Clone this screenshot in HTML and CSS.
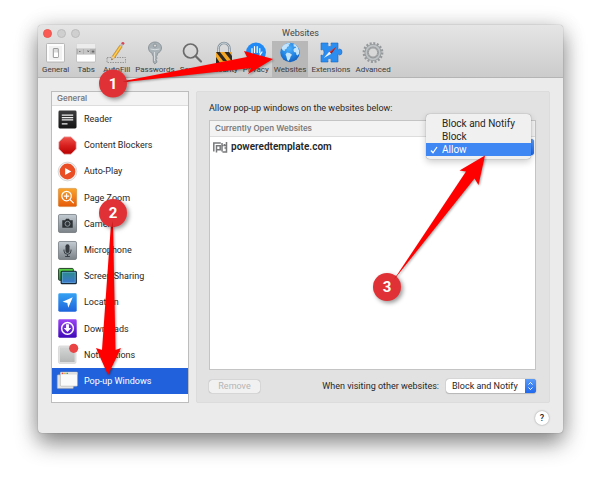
FILE: index.html
```html
<!DOCTYPE html>
<html lang="en">
<head>
<meta charset="utf-8">
<title>Websites</title>
<link rel="stylesheet" href="styles.css">
</head>
<body>
<svg class="defs" width="0" height="0" aria-hidden="true">
  <defs>
    <linearGradient id="g-dark" x2="0" y2="1"><stop stop-color="#3c3c3e"/><stop offset="1" stop-color="#151516"/></linearGradient>
    <linearGradient id="g-red" x2="0" y2="1"><stop stop-color="#f0524c"/><stop offset=".5" stop-color="#d8211f"/><stop offset="1" stop-color="#b80000"/></linearGradient>
    <linearGradient id="g-orange" x2="0" y2="1"><stop stop-color="#f9a52b"/><stop offset="1" stop-color="#e65a08"/></linearGradient>
    <linearGradient id="g-steel" x2="0" y2="1"><stop stop-color="#c3ccd2"/><stop offset="1" stop-color="#7b8389"/></linearGradient>
    <linearGradient id="g-blue" x2="0" y2="1"><stop stop-color="#35a2f3"/><stop offset="1" stop-color="#1d64dc"/></linearGradient>
    <linearGradient id="g-purple" x2="0" y2="1"><stop stop-color="#9d44f5"/><stop offset="1" stop-color="#3d08b8"/></linearGradient>
    <linearGradient id="g-green" x2="0" y2="1"><stop stop-color="#5bd544"/><stop offset="1" stop-color="#28913c"/></linearGradient>
    <linearGradient id="g-screen" x2="0" y2="1"><stop stop-color="#2a8c86"/><stop offset="1" stop-color="#3d74d6"/></linearGradient>
    <linearGradient id="g-grey" x2="0" y2="1"><stop stop-color="#d4d5d5"/><stop offset="1" stop-color="#b5b7b7"/></linearGradient>
    <radialGradient id="g-globe" cx=".45" cy=".3" r=".75"><stop stop-color="#4fb1fb"/><stop offset=".6" stop-color="#1e7fdf"/><stop offset="1" stop-color="#1559b5"/></radialGradient>
  </defs>
</svg>

<main class="window">
  <header class="chrome">
    <div class="titlebar">
      <div class="lights"><i class="light close"></i><i class="light"></i><i class="light"></i></div>
      <h1 class="title">Websites</h1>
    </div>
    <nav class="toolbar">
      <button class="tool"><svg viewBox="0 0 22 22"><rect x="1.500" y="1.500" width="18" height="18.500" rx="1" fill="#fdfdfd" stroke="#aaa" stroke-width=".8"/><rect x="4" y="4" width="13" height="14" fill="#f1f1f1"/><rect x="8.300" y="6.500" width="5" height="9" rx=".5" fill="#ddd" stroke="#888" stroke-width=".8"/><path d="M9 10.500h4v4.500H9z" fill="#fff"/></svg>General</button>
      <button class="tool"><svg viewBox="0 0 22 22"><rect x="1.500" y="1.500" width="19" height="18.500" rx="1" fill="#fff" stroke="#aaa" stroke-width=".6"/><path d="M1.500 1.500h19V6.500h-19z" fill="#ececec"/><path d="M1.500 6.500h19v6h-19z" fill="#b2b2b2"/><path d="M3 7h5v5H3zM9 7h6v5H9z" fill="#c6c6c6"/><path d="M4 9.500h1.500M12.500 8.500l1.500 1.500m0-1.500l-1.500 1.500M18 8.300v2.600m-1.300-1.300h2.600" stroke="#555" stroke-width=".7"/></svg>Tabs</button>
      <button class="tool"><svg viewBox="0 0 22 22"><rect x="1" y="15.500" width="18.500" height="5" fill="none" stroke="#8e8e8e" stroke-width=".9" stroke-dasharray="1.500 1"/><path d="M5.500 18l.8-3.800L13.800 3.200l2.400 1.600L8.700 15.800z" fill="#f0ae2c" stroke="#aa7018" stroke-width=".5"/><path d="M7.500 15L15 4" stroke="#ffdb61" stroke-width=".9"/><path d="M5.500 18l.8-3.800 2.400 1.600z" fill="#ecd2a5"/><path d="M5.500 18l.3-1.500 1 .6z" fill="#333"/><path d="M13.800 3.200L15 1.500l2.400 1.600-1.200 1.700z" fill="#bbb"/><path d="M15 1.500L15.900.2q2-.7 2.700 1.300l-1.200 1.600z" fill="#d34758"/></svg>AutoFill</button>
      <button class="tool"><svg viewBox="0 0 22 22"><path d="M11 0C7.300 0 4.500 2.500 4.500 6c0 2.500 1.500 4.500 3.800 5.500v1.500l1 1v6l1.500 2 2-1.700v-1.500l-1-1 1-1v-1.200l-.8-1 1.300-1.200v-1.900c2.500-1 4.200-3 4.200-5.500C17.500 2.500 14.700 0 11 0zm0 2a1.600 1.600 0 110 3.200A1.600 1.600 0 0111 2z" fill="#a9b2b7" stroke="#828b90" stroke-width=".8"/><path d="M6.500 7q4.500 1.500 9 0M10.500 10v9" fill="none" stroke="#d6dcdf" stroke-width="1"/></svg>Passwords</button>
      <button class="tool"><svg viewBox="0 0 22 22"><circle cx="9.500" cy="9" r="7" fill="none" stroke="#6b6b6b" stroke-width="1.700"/><path d="M14.500 14l5.500 5.500" stroke="#6b6b6b" stroke-width="2.200" stroke-linecap="round"/></svg>Search</button>
      <button class="tool"><svg viewBox="0 0 22 22"><path d="M5.500 11V6.500a5.500 5.500 0 0111 0V11" fill="none" stroke="#85939d" stroke-width="2.600"/><path d="M5.500 10V6.500a5.500 5.500 0 0111 0V10" fill="none" stroke="#cdd5da" stroke-width="1"/><rect x="3" y="10" width="16" height="11" rx="1" fill="#f5a623"/><path d="M3 10l7 9h4L7 10zM11.500 10l7 9h.5v-5l-3-4zM3 15l4 6H3z" fill="#2e2922"/></svg>Security</button>
      <button class="tool"><svg viewBox="0 0 22 22"><circle cx="11" cy="10.500" r="10" fill="#228af4"/><path d="M7 11V6.500m2.500 4V4.500m2.700 6V4.500m2.600 6.500V6.500M7 11v3q1 3 4 3t4-4l2-3" fill="none" stroke="#fff" stroke-width="1.200" stroke-linecap="round"/></svg>Privacy</button>
      <button class="tool selected" aria-pressed="true"><svg viewBox="0 0 22 22"><circle cx="11" cy="10.500" r="9.700" fill="url(#g-globe)"/><path d="M3 5C5 2 8 1 10.500 1l1 1-2 .6.600 1.300-2 1.200-.7 2-1.800.3.400 1.600-2-.5L2.500 6.500zM8 10.500l2.600.6 2.400 1.700-1.500 2-.4 1.800-1.500 2.400-1.400-1-.8-3.500L6.500 12.500zM14.500 2l2 .5L19 5.500l1.200 3.500v2.500l-1.500 2-1.300-.7-.4-2.300-2-.5-.6-2.200 1.300-1.700 1.400-.2-.8-1.400-1.500.2z" fill="#c4e4fb"/></svg>Websites</button>
      <button class="tool"><svg viewBox="0 0 22 22"><path d="M1 1h7v1q-1.500 2 1.500 2.500Q12.500 4 11 2V1h7v6.500q.5.500 1.500-.5 2.500 0 2.500 3t-2.500 3q-1-1-1.500-.5V20h-7v-1q1.500-2-1.500-2.500Q6.500 17 8 19v1H1v-7q3 1.500 3-2.500T1 8z" fill="#2b8df0" stroke="#176ac5" stroke-width=".6"/><path d="M16.500 4.500l-5.200 7.300-2.100-2z" fill="#e23b39"/><path d="M3.800 16l5.400-6.200 2.100 2z" fill="#f6f6f6"/><path d="M16.500 4.500l-5.200 7.300-1-1z" fill="#83222a"/></svg>Extensions</button>
      <button class="tool"><svg viewBox="0 0 22 22"><circle cx="11" cy="10.500" r="9.200" fill="none" stroke="#95999b" stroke-width="2.400" stroke-dasharray="2 1.613"/><circle cx="11" cy="10.500" r="6.800" fill="none" stroke="#95999b" stroke-width="3.400"/><circle cx="11" cy="10.500" r="6.800" fill="none" stroke="#bfc3c5" stroke-width="1.800"/><circle cx="11" cy="10.500" r="4.600" fill="#d8d8d8" stroke="#85888a" stroke-width=".8"/></svg>Advanced</button>
    </nav>
  </header>

  <div class="content">
    <aside class="sidebar">
      <h2 class="list-head">General</h2>
      <div class="list">
        <button class="row"><svg viewBox="0 0 20 20"><rect x=".5" y=".5" width="19" height="19" rx="1.500" fill="url(#g-dark)"/><path d="M4 5.500h12M4 8h12M4 10.500h12M4 14.500h6" stroke="#eee" stroke-width="1.300"/></svg>Reader</button>
        <button class="row"><svg viewBox="0 0 20 20"><path d="M6.300.8h7.400l5.500 5.500v7.400l-5.500 5.500H6.300L.8 13.700V6.300z" fill="url(#g-red)" stroke="#e8caca" stroke-width=".8"/></svg>Content Blockers</button>
        <button class="row"><svg viewBox="0 0 20 20"><circle cx="10" cy="10" r="9.900" fill="#f4f4f4" stroke="#c8c8c8" stroke-width=".7"/><circle cx="10" cy="10" r="8.300" fill="#e94e25"/><path d="M7.500 6.200v7.600l6.500-3.800z" fill="#fff"/></svg>Auto-Play</button>
        <button class="row"><svg viewBox="0 0 20 20"><rect x=".4" y=".4" width="19.200" height="19.200" rx="1.500" fill="url(#g-orange)" stroke="#c97720" stroke-width=".5"/><circle cx="9" cy="8.500" r="5" fill="none" stroke="#fff" stroke-width="1.300"/><path d="M12.700 12.200l3.500 3.500M6.700 8.500h4.600M9 6.200v4.600" stroke="#fff" stroke-width="1.300" stroke-linecap="round"/></svg>Page Zoom</button>
        <button class="row"><svg viewBox="0 0 20 20"><rect x=".5" y=".5" width="19" height="19" rx="1.500" fill="url(#g-steel)" stroke="#60686e" stroke-width=".7"/><path d="M4.500 6.500h3l1-1.500h3l1 1.500h3v8h-11z" fill="#2c3135"/><circle cx="10" cy="10.300" r="2.600" fill="#30363a" stroke="#929ca3" stroke-width="1"/></svg>Camera</button>
        <button class="row"><svg viewBox="0 0 20 20"><rect x=".5" y=".5" width="19" height="19" rx="1.500" fill="url(#g-steel)" stroke="#60686e" stroke-width=".7"/><rect x="7.900" y="3.500" width="4.200" height="9" rx="2.100" fill="#353b40"/><path d="M6.300 9v1.500q0 3.500 3.700 3.500t3.700-3.500V9M10 14v2m-2.500.3h5" stroke="#353b40" stroke-width="1" fill="none"/></svg>Microphone</button>
        <button class="row"><svg viewBox="0 0 20 20"><rect x=".6" y="1.500" width="15.500" height="12.500" rx="1" fill="url(#g-green)" stroke="#203a26"/><rect x="3.300" y="4.500" width="16" height="13" rx="1" fill="url(#g-screen)" stroke="#15283a" stroke-width="1.200"/><rect x="4.600" y="5.800" width="13.400" height="10.400" fill="none" stroke="#6cb1d4" stroke-width=".6"/></svg>Screen Sharing</button>
        <button class="row"><svg viewBox="0 0 20 20"><rect x=".3" y=".3" width="19.400" height="19.400" rx="1.500" fill="url(#g-blue)"/><path d="M15.500 4.500l-4.700 11-1-5-5-1.200z" fill="#fff"/></svg>Location</button>
        <button class="row"><svg viewBox="0 0 20 20"><rect x=".3" y=".3" width="19.400" height="19.400" rx="1.500" fill="url(#g-purple)"/><circle cx="10" cy="9.800" r="6.200" fill="none" stroke="#fff" stroke-width="1.500"/><path d="M8.500 5.500h3v4h2.500l-4 4.200-4-4.200h2.500z" fill="#fff"/></svg>Downloads</button>
        <button class="row"><svg viewBox="0 0 20 20"><rect x=".5" y="1" width="18.500" height="18.500" rx="1.500" fill="#e4e4e4" stroke="#ccc" stroke-width=".6"/><rect x="2" y="2.500" width="15.500" height="15.500" fill="url(#g-grey)"/><circle cx="16.500" cy="3.500" r="4.800" fill="#eb4444"/></svg>Notifications</button>
        <button class="row current" aria-current="true"><svg viewBox="0 0 20 20"><rect x="-.8" y="4" width="17" height="14.500" rx="1" fill="#e3e3e3" stroke="#999" stroke-width=".5"/><rect x="2.500" y="1" width="18" height="15" rx="1" fill="#fafafa" stroke="#9d9d9d" stroke-width=".5"/><path d="M2.700 1.300h17.600v2.400H2.700z" fill="#ddd"/><path d="M4 2.500h1.500" stroke="#e34a41" stroke-width="1.500"/><path d="M6.500 2.500H8" stroke="#e6aa38" stroke-width="1.500"/><path d="M9 2.500h1.500" stroke="#43ad4a" stroke-width="1.500"/></svg>Pop-up Windows</button>
      </div>
    </aside>

    <section class="panel">
      <h2 class="panel-title">Allow pop-up windows on the websites below:</h2>
      <div class="sites">
        <h3 class="list-head sites-head">Currently Open Websites</h3>
        <div class="site">
          <svg class="favicon" viewBox="0 0 15 11"><path d="M.8 9.500V1h7M3.500 10.500V3.800h3.700v4H4M9 1v8.500m0-6h1.500M13.500 0v10H9.500M11.500 2v1.500h2M11.500 6h2" fill="none" stroke="#77797b" stroke-width="1.500"/></svg>
          <label class="site-name" for="site-policy">poweredtemplate.com</label>
          <div class="policy">
            <select id="site-policy" class="select policy-select"><option>Allow</option></select>
            <div class="menu" role="listbox" aria-label="Pop-up policy">
              <button class="option" role="option">Block and Notify</button>
              <button class="option" role="option">Block</button>
              <button class="option chosen" role="option" aria-selected="true"><svg class="tick" viewBox="0 0 8 8"><path d="M1 4.500l2 2.300L7 1" fill="none" stroke="#fff" stroke-width="1.300"/></svg>Allow</button>
            </div>
          </div>
        </div>
      </div>
      <div class="panel-foot">
        <button class="remove" disabled>Remove</button>
        <label class="other-label" for="other-policy">When visiting other websites:</label>
        <span class="select-wrap">
          <select id="other-policy" class="select"><option>Block and Notify</option><option>Block</option><option>Allow</option></select>
          <svg class="stepper" viewBox="0 0 11 13"><path d="M3.500 5l2-2 2 2M3.500 8l2 2 2-2" fill="none" stroke="#fff" stroke-width="1"/></svg>
        </span>
      </div>
    </section>
  </div>

  <footer class="foot"><button class="help" aria-label="Help">?</button></footer>
</main>

<svg class="marks" viewBox="0 0 600 483">
  <g class="arrows">
    <path d="M124 81L247 57 244 51 273 59 248 74 251 68 126 82z"/>
    <path d="M111 224h2l2.500 126 5.500-2-13 27-12-27 6 2z"/>
    <path d="M393 281L466 171.500 459.500 170.500 485 155.500 478.500 185 474.500 178.500z"/>
  </g>
  <g class="pins"><circle cx="113" cy="83.500" r="14"/><circle cx="113" cy="213" r="14"/><circle cx="387" cy="287" r="14"/></g>
  <g class="tails"><path d="M122 82l5-1.200v1zM112.500 221l-1 6h1.500zM394 279.500l2-4 .8.500z"/></g>
  <g class="numbers"><text x="113" y="89">1</text><text x="113" y="218">2</text><text x="387" y="292">3</text></g>
</svg>
</body>
</html>
```
FILE: styles.css
```css
* {
  box-sizing: border-box;
}

body {
  margin: 0;
  min-height: 100vh;
  padding: 25px 37px 50px 38px;
  display: flex;
  background: #fff;
  color: #262626;
  font: 9px/12px Roboto, "Liberation Sans", sans-serif;
}

h1, h2, h3 {
  margin: 0;
  font: inherit;
}

button, select {
  margin: 0;
  padding: 0;
  border: 0;
  background: none;
  color: inherit;
  font: inherit;
}

svg {
  display: block;
  flex: none;
  overflow: visible;
}

.defs {
  position: absolute;
}

.window {
  flex: 1;
  display: flex;
  flex-direction: column;
  border-radius: 4px;
  background: #ebebeb;
  box-shadow: 0 0 1px rgba(0, 0, 0, .5), 0 10px 22px rgba(0, 0, 0, .45), 0 0 22px rgba(0, 0, 0, .12);
}

.chrome {
  border-bottom: 1px solid #b4b4b4;
  border-radius: 4px 4px 0 0;
  background: linear-gradient(#e5e5e5, #cbcbcb);
}

.titlebar {
  display: grid;
  grid-template-columns: 1fr auto 1fr;
  align-items: center;
  height: 16px;
  padding: 0 5px;
}

.lights {
  display: flex;
  gap: 5px;
}

.light {
  width: 9px;
  height: 9px;
  border: 1px solid #bcbcbc;
  border-radius: 50%;
  background: #cfcfcf;
}

.light.close {
  border-color: #ec5650;
  background: #fb5953;
}

.title {
  color: #444;
}

.toolbar {
  display: flex;
  gap: 1px;
  padding-left: 2px;
}

.tool {
  display: flex;
  flex-direction: column;
  align-items: center;
  min-width: 28px;
  padding: 1px 2px 2px;
  color: #3c3c3c;
  font-size: 8px;
  line-height: 11px;
}

.tool svg {
  width: 22px;
  height: 22px;
}

.tool.selected {
  background: #b8b8b8;
}

.content {
  flex: 1;
  display: flex;
  gap: 7px;
  padding: 13px 13px 0;
}

.sidebar {
  flex: 0 0 138px;
  display: flex;
  flex-direction: column;
  border: 1px solid #bdbdbd;
  background: #fff;
}

.list-head {
  padding: 0 5px;
  border-bottom: 1px solid #ddd;
  background: #f3f3f3;
  color: #7b7b7b;
  font-family: Inter, "Liberation Sans", sans-serif;
  font-size: 8px;
  font-weight: 600;
  line-height: 13px;
}

.list {
  flex: 1;
  display: flex;
  flex-direction: column;
  padding-bottom: 8px;
}

.row {
  flex: 1;
  display: flex;
  align-items: center;
  gap: 7px;
  padding: 0 6px;
  text-align: left;
}

.row svg {
  width: 19px;
  height: 19px;
}

.row.current {
  background: #2162dc;
  color: #fff;
}

.panel {
  flex: 1;
  display: flex;
  flex-direction: column;
  padding: 10px 13px 9px 12px;
  border: 1px solid #dcdcdc;
  border-radius: 2px;
  background: #e2e2e2;
}

.sites {
  flex: 1;
  margin-top: 6px;
  border: 1px solid #c4c4c4;
  background: #fff;
}

.sites-head {
  line-height: 15px;
}

.site {
  display: flex;
  align-items: center;
  gap: 3px;
  height: 20px;
  padding-left: 3px;
}

.favicon {
  width: 15px;
  height: 11px;
}

.site-name {
  flex: 1;
  font-weight: 600;
  font-size: 10px;
}

.policy {
  position: relative;
  width: 108px;
}

.select {
  display: block;
  appearance: none;
  height: 14px;
  padding: 0 18px 0 6px;
  border-radius: 3px;
  background: linear-gradient(#5a9bf8, #1e68ef) right / 11px 100% no-repeat #fff;
  box-shadow: 0 0 1px rgba(0, 0, 0, .5), 0 1px 1px rgba(0, 0, 0, .15);
}

.policy-select {
  width: 107px;
  height: 16px;
}

.menu {
  position: absolute;
  right: 4px;
  bottom: -4px;
  width: 105px;
  padding: 3px 0;
  border-radius: 4px;
  background: #f0f0f0;
  box-shadow: 0 0 1px rgba(0, 0, 0, .5), 0 3px 7px rgba(0, 0, 0, .2);
}

.option {
  display: flex;
  align-items: center;
  position: relative;
  width: 100%;
  padding-left: 16px;
  font-size: 10px;
  line-height: 13px;
}

.option.chosen {
  background: #3f87f2;
  color: #fff;
}

.tick {
  position: absolute;
  left: 4px;
  width: 8px;
  height: 8px;
}

.panel-foot {
  display: flex;
  align-items: center;
  margin-top: 9px;
}

.remove {
  width: 51px;
  height: 13px;
  border-radius: 3px;
  background: #f1f1f1;
  box-shadow: 0 0 1px rgba(0, 0, 0, .5);
  color: #b5b5b5;
}

.other-label {
  margin-left: auto;
  margin-right: 7px;
}

.select-wrap {
  position: relative;
}

.stepper {
  position: absolute;
  top: 0;
  right: 0;
  width: 11px;
  height: 14px;
  pointer-events: none;
}

.foot {
  display: flex;
  justify-content: flex-end;
  padding: 8px 14px;
}

.help {
  width: 14px;
  height: 14px;
  border-radius: 50%;
  background: #fff;
  box-shadow: 0 0 2px rgba(0, 0, 0, .4);
  font-weight: 500;
}

.marks {
  position: absolute;
  top: 0;
  left: 0;
  width: 600px;
  height: 483px;
  pointer-events: none;
}

.arrows {
  fill: #fe0000;
  filter: drop-shadow(1px 1px 1px rgba(0, 0, 0, .35));
}

.pins {
  fill: #e03236;
  filter: drop-shadow(2px 2px 2px rgba(0, 0, 0, .4));
}

.tails {
  fill: #c8191c;
}

.numbers {
  fill: #fff;
  font: 700 15px Roboto, sans-serif;
  text-anchor: middle;
}
```
